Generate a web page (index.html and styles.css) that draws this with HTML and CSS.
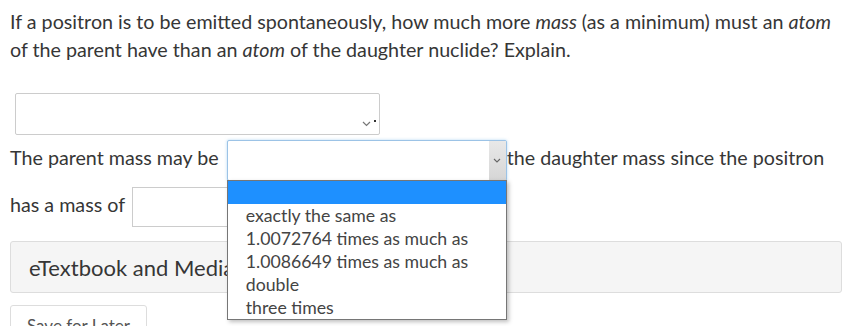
FILE: index.html
```html
<!DOCTYPE html>
<html lang="en">
<head>
    <meta charset="UTF-8">
    <title>Question</title>
    <link rel="stylesheet" href="styles.css">
</head>
<body>
    <div class="page">
        <p class="question">
            If a positron is to be emitted spontaneously, how much more <em>mass</em> (as a minimum) must an <em>atom</em>
            of the parent have than an <em>atom</em> of the daughter nuclide? Explain.
        </p>

        <div class="select select-wide">
            <span class="chevron">
                <svg width="9" height="6" viewBox="0 0 9 6"><path d="M1 1l3.5 3.5L8 1" fill="none" stroke="#777" stroke-width="1.2"/></svg>
            </span>
            <span class="dot"></span>
        </div>

        <p class="answer">The parent mass may be <span class="select-wrap"><span class="select select-inline"><span class="select-btn"><svg width="8" height="5" viewBox="0 0 8 5"><path d="M1 1l3 3 3-3" fill="none" stroke="#666" stroke-width="1.1"/></svg></span></span><span class="dropdown">
                    <span class="option selected">&nbsp;</span>
                    <span class="option">exactly the same as</span>
                    <span class="option">1.0072764 times as much as</span>
                    <span class="option">1.0086649 times as much as</span>
                    <span class="option">double</span>
                    <span class="option">three times</span>
                </span></span>the daughter mass since the positron has a mass of <span class="text-input"></span></p>

        <div class="panel">eTextbook and Media</div>

        <button class="save-btn">Save for Later</button>
    </div>
</body>
</html>
```

FILE: styles.css
```css
body {
    margin: 0;
    font-family: 'Lato', 'Open Sans', sans-serif;
    color: #363636;
    background: #fff;
    overflow: hidden;
}

.page {
    padding: 8px 10px;
}

.question {
    margin: 0;
    font-size: 19.7px;
    line-height: 28px;
}

.question em {
    font-style: italic;
}

.select {
    box-sizing: border-box;
    border: 1px solid #ccc;
    border-radius: 2px;
    background: #fff;
    position: relative;
}

.select-wide {
    width: 365px;
    height: 42px;
    margin: 29px 0 0 5px;
}

.select-wide .chevron {
    position: absolute;
    right: 8px;
    top: 17px;
}

.select-wide .dot {
    position: absolute;
    right: 3px;
    top: 26px;
    width: 2px;
    height: 2px;
    background: #333;
}

.answer {
    margin: -1px 0 0;
    font-size: 19.7px;
    line-height: 47px;
}

.select-wrap {
    position: relative;
    display: inline-block;
    vertical-align: middle;
    margin-left: 3px;
    line-height: normal;
}

.select-inline {
    display: block;
    width: 280px;
    height: 41px;
    border: 1px solid #9cc3e6;
    box-shadow: 0 0 3px rgba(102, 175, 233, 0.5);
}

.select-btn {
    position: absolute;
    right: 0;
    top: 0;
    bottom: 0;
    width: 17px;
    background: linear-gradient(#e8e8e8, #d6d6d6);
    display: flex;
    align-items: center;
    justify-content: center;
}

.dropdown {
    position: absolute;
    left: 0;
    top: 40px;
    width: 280px;
    box-sizing: border-box;
    border: 1px solid #767676;
    background: #fff;
    box-shadow: 2px 2px 4px rgba(0, 0, 0, 0.25);
    z-index: 5;
}

.option {
    display: block;
    padding: 0 18px;
    font-size: 17.7px;
    line-height: 23px;
    color: #444;
}

.option.selected {
    background: #1e90ff;
}

.text-input {
    display: inline-block;
    vertical-align: middle;
    width: 130px;
    height: 40px;
    box-sizing: border-box;
    border: 1px solid #ccc;
    margin-left: 2px;
}

.panel {
    margin-top: 13px;
    height: 52px;
    box-sizing: border-box;
    border: 1px solid #ddd;
    border-radius: 3px;
    background: #f5f5f5;
    padding: 0 18px;
    display: flex;
    align-items: center;
    font-size: 22px;
}

.save-btn {
    margin-top: 12px;
    width: 137px;
    height: 40px;
    border: 1px solid #ddd;
    border-radius: 3px;
    background: #fff;
    font-family: inherit;
    font-size: 17px;
    color: #555;
}
```
